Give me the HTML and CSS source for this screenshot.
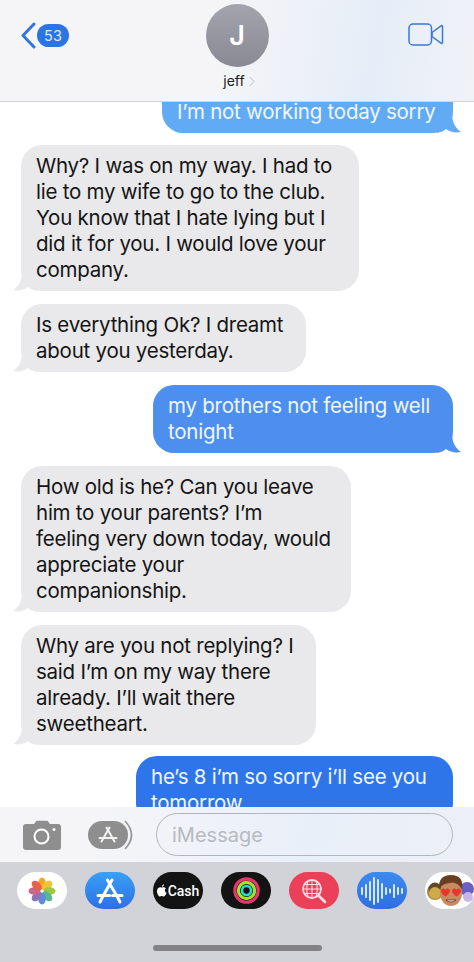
FILE: index.html
```html
<!DOCTYPE html>
<html lang="en">
<head>
<meta charset="utf-8">
<title>jeff</title>
<link rel="stylesheet" href="styles.css">
</head>
<body>
<div class="phone">
  <header class="head">
    <div class="back">
      <svg class="chev" width="16" height="27" viewBox="0 0 16 27"><path d="M14 2 L3 13.5 L14 25" fill="none" stroke="#2f76e2" stroke-width="3" stroke-linecap="round" stroke-linejoin="round"/></svg>
      <span class="badge">53</span>
    </div>
    <div class="contact">
      <div class="avatar">J</div>
      <div class="name">jeff <svg width="6" height="11" viewBox="0 0 6 11"><path d="M.8 1 L5 5.500 L.8 10" fill="none" stroke="#b9b9bd" stroke-width="1"/></svg></div>
    </div>
    <svg class="video" width="36" height="24" viewBox="0 0 36 24"><rect x="1" y="1" width="22.500" height="21" rx="4" fill="none" stroke="#3a78d6" stroke-width="1.500"/><path d="M24 9.500 L33 2.800 Q34.500 2 34.500 3.800 V19.200 Q34.500 21 33 20.200 L24 13.500 Z" fill="none" stroke="#3a78d6" stroke-width="1.500" stroke-linejoin="round"/></svg>
  </header>

  <main class="thread">
    <div class="msg out light first">I’m not working today sorry</div>
    <div class="msg in w338">Why? I was on my way. I had to lie to my wife to go to the club. You know that I hate lying but I did it for you. I would love your company.</div>
    <div class="msg in w285">Is everything Ok? I dreamt about you yesterday.</div>
    <div class="msg out mid w300">my brothers not feeling well tonight</div>
    <div class="msg in w330">How old is he? Can you leave him to your parents? I’m<br>feeling very down today, would appreciate your companionship.</div>
    <div class="msg in w295">Why are you not replying? I said I’m on my way there already. I’ll wait there sweetheart.</div>
    <div class="msg out deep w317">he’s 8 i’m so sorry i’ll see you tomorrow</div>
  </main>

  <section class="composer">
    <svg class="camera" width="38" height="30" viewBox="0 0 38 30"><path d="M3 4 H11 L13.500 .8 H24.500 L27 4 H35 Q38 4 38 7 V27 Q38 30 35 30 H3 Q0 30 0 27 V7 Q0 4 3 4 Z" fill="#8e8e8e"/><circle cx="18.500" cy="16.500" r="7" fill="none" stroke="#fff" stroke-width="2"/><circle cx="31" cy="9.500" r="1.500" fill="#fff"/></svg>
    <div class="apps">
      <svg width="46" height="30" viewBox="0 0 46 30"><path d="M37 1 Q50 15 37 29" fill="none" stroke="#9a9a9d" stroke-width="1.800"/><rect x="0" y="1" width="40" height="28" rx="14" fill="#8e8e8e"/><path d="M21.500 7.500 L13.500 21.500 M18.500 7.500 L26.500 21.500 M11.500 18 H28.500" stroke="#f2f2f2" stroke-width="2" stroke-linecap="round" fill="none"/></svg>
    </div>
    <div class="field">iMessage</div>
  </section>

  <section class="tray">
    <div class="pills">
      <div class="pill white">
        <svg width="28" height="28" viewBox="-14 -14 28 28">
          <g><ellipse cx="0" cy="-7.500" rx="3.800" ry="6" fill="#f6a623"/><ellipse cx="0" cy="-7.500" rx="3.800" ry="6" fill="#f2c230" transform="rotate(45)"/><ellipse cx="0" cy="-7.500" rx="3.800" ry="6" fill="#9cc843" transform="rotate(90)"/><ellipse cx="0" cy="-7.500" rx="3.800" ry="6" fill="#58b693" transform="rotate(135)"/><ellipse cx="0" cy="-7.500" rx="3.800" ry="6" fill="#5a8ed6" transform="rotate(180)"/><ellipse cx="0" cy="-7.500" rx="3.800" ry="6" fill="#8d73b8" transform="rotate(225)"/><ellipse cx="0" cy="-7.500" rx="3.800" ry="6" fill="#c8688c" transform="rotate(270)"/><ellipse cx="0" cy="-7.500" rx="3.800" ry="6" fill="#e8604c" transform="rotate(315)"/></g>
          <circle r="1.300" fill="#fff"/>
        </svg>
      </div>
      <div class="pill store">
        <svg width="28" height="28" viewBox="0 0 28 28"><path d="M16 3 L6 21 M11.500 3 L22 21 M2 18.500 H13.500 M16.500 18.500 H26 M4 25 L6 21 M22 21 L24 25" stroke="#fff" stroke-width="3" stroke-linecap="round" fill="none"/></svg>
      </div>
      <div class="pill black cash">
        <svg width="10" height="13" viewBox="0 0 10 13"><path d="M7 0 Q7 2.500 5 3 Q4.800 1 7 0 Z M5 3.600 C6 3.100 7.600 2.800 9 4.300 C7.200 5.500 7.600 8 9.600 8.800 C8.900 10.700 7.800 12.500 6.600 12.500 C5.800 12.500 5.500 12 4.700 12 C3.900 12 3.500 12.500 2.800 12.500 C1.500 12.500 0 9.500 0 7.200 C0 4.500 2 3 3.500 3.200 C4.100 3.200 4.600 3.600 5 3.600 Z" fill="#fff"/></svg><span>Cash</span>
      </div>
      <div class="pill black">
        <svg width="27" height="27" viewBox="0 0 30 30" fill="none"><circle cx="15" cy="15" r="13" stroke="#e8346f" stroke-width="3.500"/><circle cx="15" cy="15" r="9" stroke="#a4e22e" stroke-width="3.500"/><circle cx="15" cy="15" r="5" stroke="#2fd5cf" stroke-width="3"/></svg>
      </div>
      <div class="pill red">
        <svg width="26" height="26" viewBox="0 0 26 26" fill="none" stroke="#fbdde2"><circle cx="11" cy="11" r="9" stroke-width="1.800"/><path d="M2 11 H20 M3.500 6.500 H18.500 M3.500 15.500 H18.500 M11 2 V20 M7 3 Q4.500 11 7 19 M15 3 Q17.500 11 15 19" stroke-width="1.100"/><path d="M17.500 17.500 L24 24" stroke-width="2.600" stroke-linecap="round"/></svg>
      </div>
      <div class="pill wave">
        <svg width="44" height="30" viewBox="0 0 44 30" stroke="#d5e8fd" stroke-width="2" stroke-linecap="round"><path d="M2 12 V18 M6 9 V21 M10 6 V24 M14 2 V28 M18 4 V26 M22 8 V22 M26 12 V18 M30 13.500 V16.500 M34 9 V21 M38 12 V18 M42 13 V17"/></svg>
      </div>
      <div class="pill white">
        <svg width="48" height="37" viewBox="0 0 48 37">
          <circle cx="9" cy="20" r="8" fill="#a98a3a"/><circle cx="9" cy="17" r="6.500" fill="#5a4a28"/><circle cx="9" cy="21" r="6" fill="#cfa94a"/>
          <circle cx="41" cy="17" r="7" fill="#6b5fc0"/><circle cx="42" cy="25" r="5" fill="#c9b4e8"/>
          <ellipse cx="25" cy="21" rx="11" ry="13" fill="#c98a5e"/><path d="M13 17 Q12 3 25 3 Q38 3 36 17 Q30 9 24 11 Q17 11 13 17 Z" fill="#6b3d24"/>
          <path d="M19.500 24.500 C15 21.500 14.500 19 15.500 17.500 C16.800 16 18.800 16.500 19.500 18 C20.200 16.500 22.200 16 23.500 17.500 C24.500 19 24 21.500 19.500 24.500 Z" fill="#e8352e"/><path d="M30.500 24.500 C26 21.500 25.500 19 26.500 17.500 C27.800 16 29.800 16.500 30.500 18 C31.200 16.500 33.200 16 34.500 17.500 C35.500 19 35 21.500 30.500 24.500 Z" fill="#e8352e"/><path d="M20 28 Q25 32 30 28 Z" fill="#fff" stroke="#6a2a1a" stroke-width=".8"/>
        </svg>
      </div>
    </div>
    <div class="home"></div>
  </section>
</div>
</body>
</html>
```
FILE: styles.css
```css
* { box-sizing: border-box; }
html, body { margin: 0; padding: 0; }
body { font-family: Inter, "Liberation Sans", sans-serif; background: #fff; }
.phone { width: 474px; height: 962px; display: flex; flex-direction: column; overflow: hidden; }

.head {
  flex: 0 0 102px;
  position: relative;
  z-index: 2;
  display: grid;
  grid-template-columns: 1fr auto 1fr;
  align-items: start;
  padding: 4px 30px 0;
  background: linear-gradient(100deg, #f5f5f7 45%, #e6edf8 78%, #f0f2f7 100%);
  border-bottom: 1px solid #d4d4d6;
}
.back { display: flex; align-items: center; margin: 18px 0 0 -10px; }
.chev { display: block; }
.badge {
  width: 32px; height: 23px; margin-left: 1px;
  border-radius: 12px;
  background: #2b74e3;
  color: #dfeafb;
  font-size: 14.500px;
  line-height: 23px;
  text-align: center;
}
.contact { width: 80px; display: flex; flex-direction: column; align-items: center; }
.avatar {
  width: 63px; height: 63px; border-radius: 50%;
  background: linear-gradient(#a3a4ad, #888992);
  color: #fff;
  font-size: 27px; font-weight: 600;
  line-height: 63px; text-align: center;
}
.name { margin-top: 5px; font-size: 14px; line-height: 18px; color: #222; display: flex; align-items: center; gap: 4px; padding-left: 4px; }
.video { margin-top: 19px; justify-self: end; }

.thread {
  flex: 1 1 0;
  min-height: 0;
  overflow: hidden;
  display: flex;
  flex-direction: column;
  align-items: flex-start;
  gap: 13px;
  padding: 0 21px;
}
.msg {
  position: relative;
  flex: none;
  padding: 8px 12px 8px 15px;
  border-radius: 21px;
  font-size: 20.500px;
  line-height: 26px;
  letter-spacing: -.24px;
  color: #151515;
  background: #e9e9eb;
}
.msg::after {
  content: "";
  position: absolute;
  z-index: -1;
  bottom: 0;
  left: -8px;
  width: 24px;
  height: 20px;
  background: inherit;
  clip-path: path("M9 0 C9 9 6 15 0 19 C6 20 11 19 15 16 C17 18 20 19 24 20 L24 0 Z");
}
.msg.out { align-self: flex-end; color: #f1f6fe; }
.msg.out::after {
  left: auto;
  right: -8px;
  transform: scaleX(-1);
}
.light { background: #60abf3; }
.mid { background: #4c8fee; }
.deep { background: #2e75ea; margin-top: -2px; }
.msg.first { width: 291px; height: 33px; margin: -2px 0 -1px; padding-top: 0; padding-bottom: 0; white-space: nowrap; line-height: 24px; border-radius: 0 0 21px 21px; }
.w338 { width: 338px; }
.w285 { width: 285px; }
.w300 { width: 300px; }
.w330 { width: 330px; }
.w295 { width: 295px; }
.w317 { width: 317px; }

.composer {
  flex: 0 0 55px;
  position: relative;
  z-index: 2;
  display: flex;
  align-items: center;
  padding: 0 21px 0 23px;
  background: linear-gradient(100deg, #f5f5f8 20%, #e9eff9 65%, #edf0f6 100%);
}
.camera { display: block; }
.apps { margin-left: 27px; display: flex; }
.field {
  width: 297px; height: 43px;
  margin-left: 22px;
  padding-left: 15px;
  border: 1.500px solid #b4b5ba;
  border-radius: 22px;
  color: #b7bac0;
  font-size: 20px;
  line-height: 42px;
}

.tray {
  flex: 0 0 100px;
  position: relative;
  z-index: 2;
  background: #d2d3d8;
  padding-top: 10px;
  display: flex;
  flex-direction: column;
  align-items: center;
}
.pills { width: 474px; display: flex; gap: 18px; padding-left: 17px; }
.pill { flex: none; width: 50px; height: 37px; border-radius: 19px; display: flex; align-items: center; justify-content: center; overflow: hidden; }
.white { background: #fff; }
.store { background: linear-gradient(#3aa0f6, #2c70e4); }
.black { background: #131313; }
.red { background: #ec3f58; }
.wave { background: linear-gradient(#3b8bf0, #2f6ee0); }
.cash { color: #fff; font-family: Roboto, "Liberation Sans", sans-serif; font-size: 14px; font-weight: 500; gap: 1px; }
.home { width: 169px; height: 6px; margin-top: 36px; border-radius: 3px; background: #838387; }
```
